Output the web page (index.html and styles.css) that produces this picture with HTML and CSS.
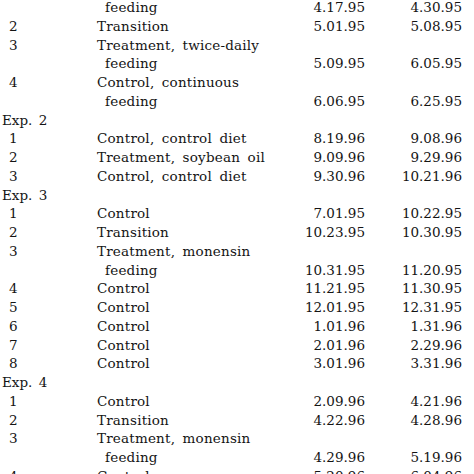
FILE: index.html
```html
<!DOCTYPE html>
<html>
<head>
<meta charset="utf-8">
<link rel="stylesheet" href="styles.css">
</head>
<body>
<div class="table">
  <div class="row"><span class="num"></span><span class="desc cont">feeding</span><span class="d1">4.17.95</span><span class="d2">4.30.95</span></div>
  <div class="row"><span class="num">2</span><span class="desc">Transition</span><span class="d1">5.01.95</span><span class="d2">5.08.95</span></div>
  <div class="row"><span class="num">3</span><span class="desc">Treatment, twice-daily</span><span class="d1"></span><span class="d2"></span></div>
  <div class="row"><span class="num"></span><span class="desc cont">feeding</span><span class="d1">5.09.95</span><span class="d2">6.05.95</span></div>
  <div class="row"><span class="num">4</span><span class="desc">Control, continuous</span><span class="d1"></span><span class="d2"></span></div>
  <div class="row"><span class="num"></span><span class="desc cont">feeding</span><span class="d1">6.06.95</span><span class="d2">6.25.95</span></div>
  <div class="row exp">Exp. 2</div>
  <div class="row"><span class="num">1</span><span class="desc">Control, control diet</span><span class="d1">8.19.96</span><span class="d2">9.08.96</span></div>
  <div class="row"><span class="num">2</span><span class="desc">Treatment, soybean oil</span><span class="d1">9.09.96</span><span class="d2">9.29.96</span></div>
  <div class="row"><span class="num">3</span><span class="desc">Control, control diet</span><span class="d1">9.30.96</span><span class="d2">10.21.96</span></div>
  <div class="row exp">Exp. 3</div>
  <div class="row"><span class="num">1</span><span class="desc">Control</span><span class="d1">7.01.95</span><span class="d2">10.22.95</span></div>
  <div class="row"><span class="num">2</span><span class="desc">Transition</span><span class="d1">10.23.95</span><span class="d2">10.30.95</span></div>
  <div class="row"><span class="num">3</span><span class="desc">Treatment, monensin</span><span class="d1"></span><span class="d2"></span></div>
  <div class="row"><span class="num"></span><span class="desc cont">feeding</span><span class="d1">10.31.95</span><span class="d2">11.20.95</span></div>
  <div class="row"><span class="num">4</span><span class="desc">Control</span><span class="d1">11.21.95</span><span class="d2">11.30.95</span></div>
  <div class="row"><span class="num">5</span><span class="desc">Control</span><span class="d1">12.01.95</span><span class="d2">12.31.95</span></div>
  <div class="row"><span class="num">6</span><span class="desc">Control</span><span class="d1">1.01.96</span><span class="d2">1.31.96</span></div>
  <div class="row"><span class="num">7</span><span class="desc">Control</span><span class="d1">2.01.96</span><span class="d2">2.29.96</span></div>
  <div class="row"><span class="num">8</span><span class="desc">Control</span><span class="d1">3.01.96</span><span class="d2">3.31.96</span></div>
  <div class="row exp">Exp. 4</div>
  <div class="row"><span class="num">1</span><span class="desc">Control</span><span class="d1">2.09.96</span><span class="d2">4.21.96</span></div>
  <div class="row"><span class="num">2</span><span class="desc">Transition</span><span class="d1">4.22.96</span><span class="d2">4.28.96</span></div>
  <div class="row"><span class="num">3</span><span class="desc">Treatment, monensin</span><span class="d1"></span><span class="d2"></span></div>
  <div class="row"><span class="num"></span><span class="desc cont">feeding</span><span class="d1">4.29.96</span><span class="d2">5.19.96</span></div>
  <div class="row"><span class="num">4</span><span class="desc">Control</span><span class="d1">5.20.96</span><span class="d2">6.04.96</span></div>
</div>
</body>
</html>
```
FILE: styles.css
```css
html, body {
  margin: 0;
  padding: 0;
  background: #ffffff;
  overflow: hidden;
}
.table {
  margin-top: -2px;
  font-family: "DejaVu Serif", "Liberation Serif", serif;
  font-size: 13.5px;
  line-height: 18.75px;
  color: #141414;
}
.row {
  display: grid;
  grid-template-columns: 97px 203px 65px 97px;
  height: 18.75px;
  white-space: nowrap;
}
.num {
  padding-left: 9px;
}
.desc {
  letter-spacing: 0.2px;
  word-spacing: 3px;
}
.desc.cont {
  padding-left: 8px;
}
.d1, .d2 {
  text-align: right;
}
.exp {
  display: block;
  padding-left: 2px;
  word-spacing: 2px;
}
```
